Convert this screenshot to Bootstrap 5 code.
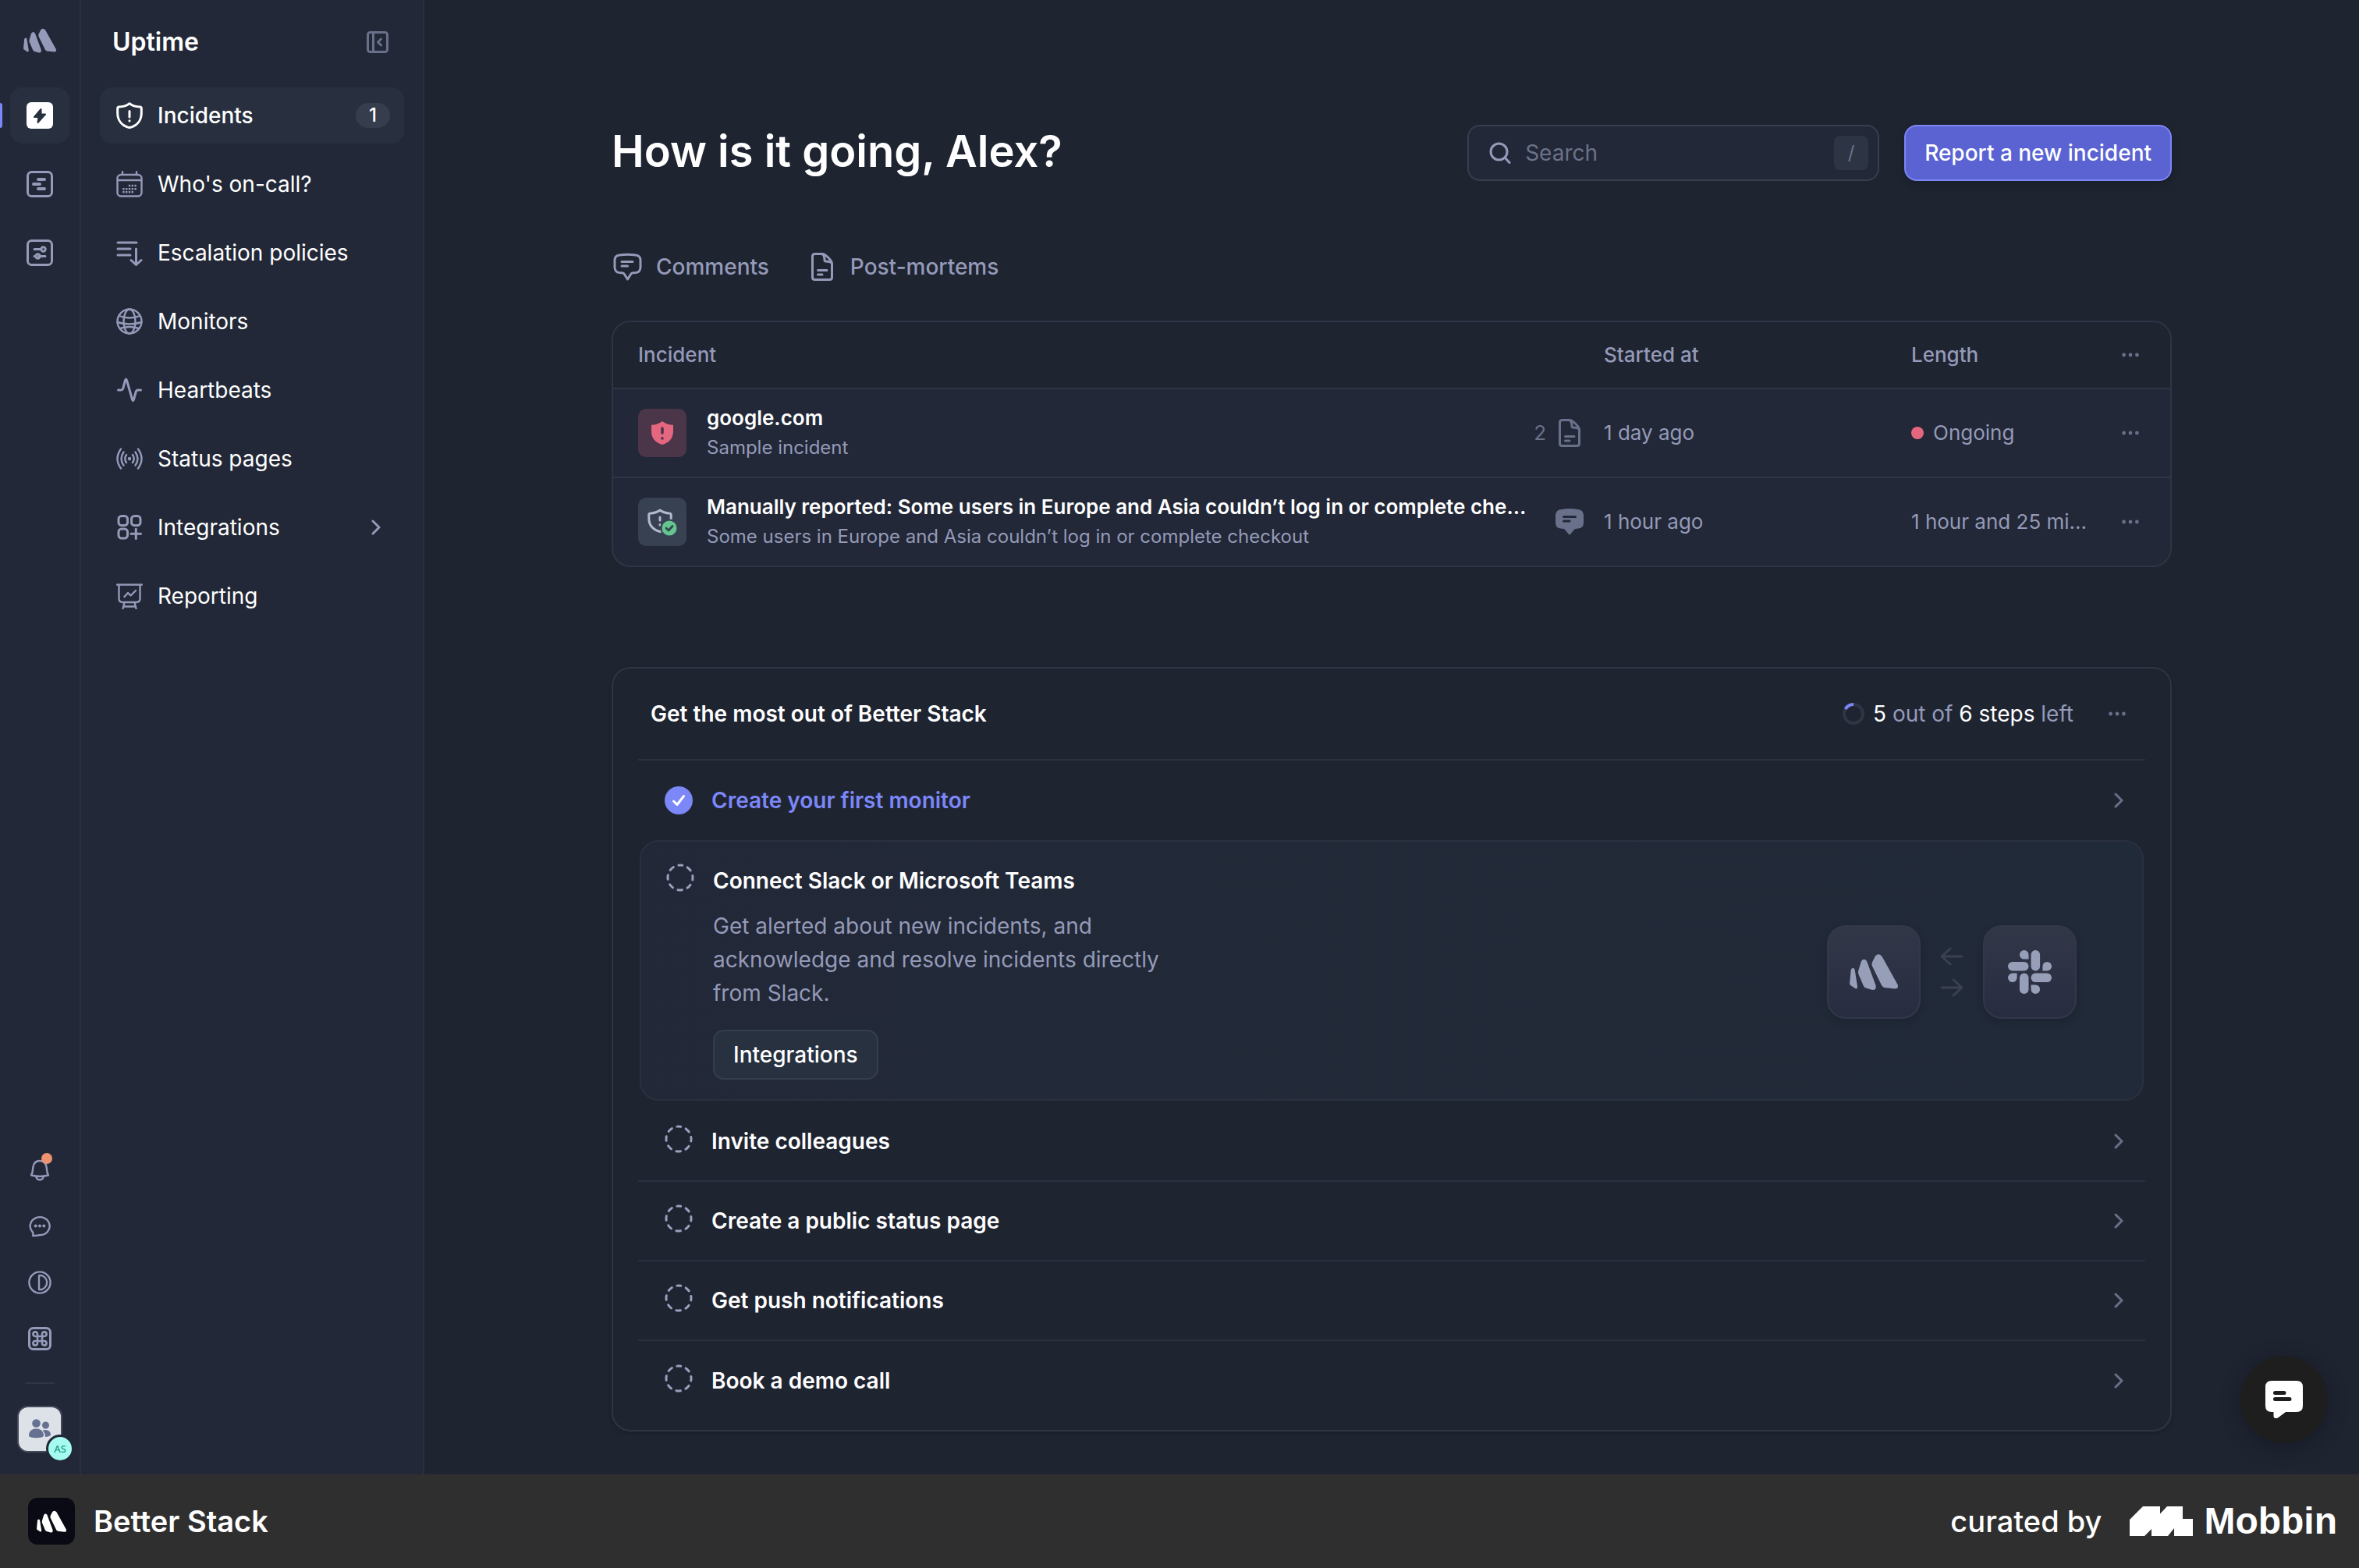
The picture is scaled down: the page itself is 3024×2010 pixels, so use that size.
<!DOCTYPE html>
<html lang="en">
<head>
<meta charset="utf-8">
<meta name="viewport" content="width=device-width, initial-scale=1">
<title>Incidents | Better Stack</title>
<link href="https://cdn.jsdelivr.net/npm/bootstrap@5.3.0/dist/css/bootstrap.min.css" rel="stylesheet">
<style>
  :root {
    --page: #1f2431;
    --panel: #222837;
    --raised: #28303f;
    --line: #2f3544;
    --line-soft: #2a303f;
    --muted: #949ab8;
    --dim: #697089;
    --accent: #7c87f8;
  }
  body { background: var(--page); color: #fff; font-family: Inter, "Liberation Sans", sans-serif; font-size: 28px; line-height: 40px; }
  svg { display: block; flex: none; }
  .ln { fill: none; stroke: currentColor; stroke-width: 3; stroke-linecap: round; stroke-linejoin: round; }
  .ln-thin { stroke-width: 2.4; }
  .app-button { background: none; border: 0; padding: 0; color: inherit; display: flex; align-items: center; justify-content: center; }
  .text-soft { color: var(--muted); }
  .text-dim { color: var(--dim); }

  .rail { width: 104px; background: var(--panel); border-right: 2px solid var(--line-soft); color: var(--muted); padding: 0 13px 28px; }
  .rail-logo { height: 104px; margin-bottom: 8px; }
  .rail-link { width: 76px; height: 72px; border-radius: 16px; color: inherit; margin-bottom: 16px; }
  .rail-link.active { background: var(--raised); color: #fff; }
  .rail-mark { left: -16px; top: 20px; width: 6px; height: 32px; border-radius: 3px; background: var(--accent); }
  .rail-tool { width: 76px; height: 72px; }
  .rail-rule { width: 38px; height: 2px; background: var(--line); margin: 20px 0 28px; }
  .notice-dot { width: 14px; height: 14px; border-radius: 50%; background: #ee9270; right: -3px; top: -8px; }
  .team-tile { width: 58px; height: 60px; border-radius: 14px; border: 2px solid #444a5a; background: #dde1e8; color: #667091; }
  .user-dot { width: 36px; height: 36px; left: 35px; top: 35px; border-radius: 50%; border: 3px solid var(--panel); background: #a5fbf0; color: #1f9c8a; font: 500 13px/30px "Noto Sans", sans-serif; text-align: center; }

  .side { width: 440px; background: var(--panel); border-right: 2px solid var(--line-soft); padding: 0 24px; }
  .side-head { height: 108px; padding: 0 20px 0 16px; margin-bottom: 4px; font-size: 32px; font-weight: 600; }
  .side .nav-link { height: 72px; border-radius: 16px; margin-bottom: 16px; padding: 0 22px 0 21px; gap: 19px; color: #fff; }
  .side .nav-link svg { color: var(--muted); }
  .side .nav-link.active { background: var(--raised); font-weight: 500; padding-right: 18px; }
  .side .nav-link.active svg { color: #fff; }
  .side .badge { width: 44px; height: 32px; padding: 0; font-size: 24px; line-height: 32px; font-weight: 500; background: #363d4d; }

  .page-wrap { max-width: 2000px; padding-top: 160px; }
  .page-head { gap: 32px; margin-bottom: 92px; }
  h1 { font-size: 56px; line-height: 68px; font-weight: 600; margin: 0; }
  .search-box { width: 528px; height: 72px; border: 2px solid #373e4d; border-radius: 16px; background: #222837; padding: 0 12px 0 26px; gap: 18px; color: var(--muted); }
  .search-box input { background: none; border: 0; padding: 0; min-width: 0; font-size: 28px; color: #fff; }
  .search-box input:focus { background: none; box-shadow: none; color: #fff; }
  .search-box input::placeholder { color: #6b728a; }
  .search-box kbd { width: 44px; height: 44px; border-radius: 8px; background: #2d3444; color: #6b728a; font: 400 24px/44px Inter, sans-serif; text-align: center; padding: 0; flex: none; }
  .btn-report { height: 72px; padding: 0 24px; border: 2px solid #7c86f5; border-radius: 16px; background: #5b63d3; color: #fff; font-size: 28px; font-weight: 500; box-shadow: 0 4px 8px rgba(16,20,30,.4); white-space: nowrap; }
  .btn-report:hover { background: #666fe0; color: #fff; }

  .quick-links { gap: 54px; padding-left: 2px; margin-bottom: 51px; line-height: 36px; font-weight: 500; }
  .quick-links a { color: var(--muted); gap: 18px; }

  .frame { border: 2px solid var(--line); border-radius: 24px; overflow: hidden; }
  .incidents { margin-bottom: 128px; background: var(--panel); }
  .incidents table { table-layout: fixed; border-collapse: separate; border-spacing: 0; margin: 0; font-size: 26px; --bs-table-bg: transparent; color: var(--muted); }
  .incidents th, .incidents td { padding: 0; border: 0; vertical-align: middle; font-weight: 400; color: var(--muted); }
  .incidents thead th { height: 84px; background: var(--page); font-weight: 500; }
  .incidents tbody td { height: 114px; border-top: 2px solid var(--line); }
  .incidents .first { padding-left: 32px; }
  .c-flag { width: 98px; } .c-start { width: 394px; } .c-length { width: 230px; } .c-more { width: 102px; }
  .incidents .flag-cell { padding-right: 26px; }
  .kind { width: 62px; height: 62px; border-radius: 10px; flex: none; }
  .kind-open { background: #4b3549; color: #e5677f; }
  .kind-done { background: #384152; color: #b3bad0; }
  .inc-name { gap: 26px; }
  .inc-title { font-weight: 600; color: #fff; line-height: 38px; }
  .inc-sub { font-size: 24px; line-height: 38px; }
  .inc-live { gap: 12px; }
  .live-dot { width: 16px; height: 16px; border-radius: 50%; background: #e5677f; }

  .steps { padding: 0 32px 12px; box-shadow: 0 2px 4px rgba(16,20,30,.3); }
  .steps-head { height: 118px; padding: 0 25px 0 16px; border-bottom: 2px solid var(--line-soft); }
  .steps-head h2 { font-size: 28px; line-height: 40px; font-weight: 600; margin: 0; }
  .steps-menu { margin-left: 45px; }
  .step-row { height: 102px; padding: 0 28px 0 34px; gap: 24px; border-bottom: 2px solid var(--line-soft); color: #fff; font-weight: 600; }
  .step-row.done { color: var(--accent); }
  .step-row.done, .step-row.last { border-bottom: 0; }
  .todo-ring { margin-bottom: 6px; color: #9aa0bd; }
  .step-open { margin: 0 2px 2px; height: 334px; padding: 28px 84px 0 32px; border: 2px solid var(--line-soft); border-radius: 24px; background: linear-gradient(90deg, #222837, #212a38); gap: 24px; }
  .step-open h3 { font-size: 28px; line-height: 40px; font-weight: 600; margin: 2px 0 17px; }
  .step-open p { width: 600px; line-height: 43px; margin-bottom: 25px; font-weight: 400; }
  .btn-step { height: 64px; padding: 0 24px; border: 2px solid #353e4d; border-radius: 14px; background: #28313f; color: #fff; font-size: 28px; font-weight: 500; }
  .btn-step:hover { background: #313b4a; color: #fff; }
  .app-tile { width: 120px; height: 120px; border: 2px solid #323848; border-radius: 24px; background: linear-gradient(#323748, #282c41); box-shadow: 0 4px 8px rgba(20,24,36,.35); color: #979eb8; }
  .link-pair { color: #3a4152; align-self: center; }

  .chat-fab { right: 40px; bottom: 160px; width: 112px; height: 112px; border-radius: 50%; background: #1e1e1e; color: #fff; box-shadow: 0 4px 24px rgba(12,15,26,.45); }

  .brand-bar { height: 120px; background: #2f2f2f; padding: 0 28px 0 36px; font-weight: 500; }
  .brand-tile { width: 60px; height: 60px; border-radius: 12px; background: #090a13; }
  .brand-name { font-size: 38px; font-weight: 600; }
  .brand-by { font-size: 38px; font-weight: 500; margin-right: 36px; }
  .mobbin-name { font: 700 48px/56px "Liberation Sans", sans-serif; margin-left: 14px; }
</style>
<script src="https://cdn.jsdelivr.net/npm/bootstrap@5.3.0/dist/js/bootstrap.bundle.min.js"></script>
</head>
<body>
<svg width="0" height="0" class="position-absolute" aria-hidden="true">
  <symbol id="i-stack" viewBox="0 0 62 46"><path fill="currentColor" d="M33 2.500Q37.500-2 41.500 3L61.500 39Q63.500 44.500 58 44.500L44.500 43Q42.500 42.500 41 40L29 15.500Q28 13 29 10.500ZM15 9Q18.500 4.500 22 9L33.500 40Q35 46 29 46L21 43.500Q18.700 43 17.700 40.500L11.500 26Q10.500 23.500 11.500 20.500ZM1.600 21Q2 18 4.300 18Q6.500 18 6.800 21L10 41Q10.300 45.500 7 44L1.200 40Q0 39 .1 37.500Z"/></symbol>
  <symbol id="i-doc" viewBox="0 0 28 36"><g class="ln"><path d="M4.500 1.500H14C18 1.500 26.500 10 26.500 14V31.500Q26.500 34.500 23.500 34.500H4.500Q1.500 34.500 1.500 31.500V4.500Q1.500 1.500 4.500 1.500Z"/><path d="M14.500 2C17 4 17 7 17 9.500Q17 11 18.500 11C22 11 25 11.500 26.300 13.500M8.500 22.500H20M8.500 28H14"/></g></symbol>
  <symbol id="i-more" viewBox="0 0 22 6"><g fill="currentColor"><circle cx="2.600" cy="3" r="2.400"/><circle cx="11" cy="3" r="2.400"/><circle cx="19.400" cy="3" r="2.400"/></g></symbol>
  <symbol id="i-chev" viewBox="0 0 12 20"><path class="ln" d="M2 2L10 10L2 18"/></symbol>
  <symbol id="i-ring" viewBox="0 0 36 36"><circle cx="18" cy="18" r="16" fill="none" stroke="currentColor" stroke-width="3" stroke-linecap="round" stroke-dasharray="5.600 6.966" stroke-dashoffset="2.800" transform="rotate(-90 18 18)"/></symbol>
</svg>

<div class="min-vh-100 d-flex flex-column">
  <div class="d-flex flex-grow-1">
    <div class="rail d-flex flex-column align-items-center flex-shrink-0">
      <a href="#" class="rail-logo d-flex align-items-center text-reset" aria-label="Better Stack home"><svg width="42" height="32"><use href="#i-stack"/></svg></a>
      <a href="#" class="rail-link active position-relative d-flex align-items-center justify-content-center" aria-label="Uptime">
        <span class="rail-mark position-absolute"></span>
        <svg width="34" height="34" viewBox="0 0 34 34"><rect width="34" height="34" rx="6" fill="#fff"/><path fill="#28303f" stroke="#28303f" stroke-width="2" stroke-linejoin="round" d="M18.500 9L10 19H15.500L14.500 26L24 15.500H18.500Z"/></svg>
      </a>
      <a href="#" class="rail-link d-flex align-items-center justify-content-center" aria-label="Logs">
        <svg width="34" height="34" viewBox="0 0 34 34"><g class="ln"><rect x="1.500" y="1.500" width="31" height="31" rx="5"/><path stroke-width="4" d="M15 11H23M9 17H17M15 23H23"/></g></svg>
      </a>
      <a href="#" class="rail-link d-flex align-items-center justify-content-center" aria-label="Settings">
        <svg width="34" height="34" viewBox="0 0 34 34"><g class="ln"><rect x="1.500" y="1.500" width="31" height="31" rx="5"/><path d="M10 12.500H18M15.500 21.500H24M10 21.500H12"/><circle cx="21.500" cy="12.500" r="2.700"/><circle cx="14.500" cy="21.500" r="2.700"/></g></svg>
      </a>
      <button class="app-button rail-tool mt-auto" aria-label="Notifications">
        <span class="position-relative">
          <svg width="26" height="28" viewBox="0 0 26 28"><g class="ln ln-thin"><path d="M2 20.500C4.500 17 3.500 14 4.500 9.500C5.500 4.500 9 2 13 2S20.500 4.500 21.500 9.500C22.500 14 21.500 17 24 20.500Q18 22 13 22T2 20.500Z"/><path d="M8.500 23Q9.500 26.500 13 26.500T17.500 23"/></g></svg>
          <span class="notice-dot position-absolute"></span>
        </span>
      </button>
      <button class="app-button rail-tool" aria-label="Feedback">
        <svg width="28" height="28" viewBox="0 0 28 28"><g class="ln ln-thin"><path d="M5 26C6 24.500 5.500 22.500 4.500 21A12.500 11.500 0 1 1 14 25.200C11 25.600 8 26.200 5 26Z"/></g><g fill="currentColor"><circle cx="8.700" cy="13.500" r="2"/><circle cx="14" cy="13.500" r="2"/><circle cx="19.300" cy="13.500" r="2"/></g></svg>
      </button>
      <button class="app-button rail-tool" aria-label="Theme">
        <svg width="30" height="30" viewBox="0 0 30 30"><g class="ln ln-thin"><circle cx="15" cy="15" r="13.600"/><path d="M14 6.500Q14 5.800 15 5.800A9.200 9.200 0 0 1 15 24.200Q14 24.200 14 23.500Z"/></g></svg>
      </button>
      <button class="app-button rail-tool" aria-label="Shortcuts">
        <svg width="30" height="30" viewBox="0 0 30 30"><g class="ln"><rect x="1.500" y="1.500" width="27" height="27" rx="5"/><path stroke-width="2.600" d="M12 12H18V18H12ZM12 12V9A2.800 2.800 0 1 0 9 12ZM18 12H21A2.800 2.800 0 1 0 18 9ZM18 18V21A2.800 2.800 0 1 0 21 18ZM12 18H9A2.800 2.800 0 1 0 12 21Z"/></g></svg>
      </button>
      <div class="rail-rule"></div>
      <button class="app-button team-tile position-relative" aria-label="Team and account">
        <svg width="28" height="26" viewBox="0 0 28 26"><g fill="currentColor"><circle cx="9.500" cy="5.500" r="5.300"/><circle cx="21.500" cy="8" r="4.500"/><path d="M0 22C0 15 4 12.500 9.500 12.500S19 15 19 22C16 25 3 25 0 22ZM17.500 14.500Q28 12.500 28 21Q25 23 21 23Q21 18 17.500 14.500Z"/></g></svg>
        <span class="user-dot position-absolute">AS</span>
      </button>
    </div>

    <aside class="side flex-shrink-0">
      <div class="side-head d-flex align-items-center justify-content-between">
        <span>Uptime</span>
        <button class="app-button text-dim" aria-label="Collapse sidebar"><svg width="28" height="28" viewBox="0 0 28 28"><g class="ln"><rect x="1.500" y="1.500" width="25" height="25" rx="3"/><path d="M8.500 2V26M18.500 10L14.500 14L18.500 18"/></g></svg></button>
      </div>
      <nav class="nav flex-column">
        <a href="#" class="nav-link active d-flex align-items-center">
          <svg width="34" height="34" viewBox="0 0 34 34"><path class="ln" d="M17 1.700C13 5 8 6 3.500 6Q1.800 6.300 1.700 8V14C1.700 24 8 30.500 17 32.600C26 30.500 32.300 24 32.300 14V8Q32.200 6.300 30.500 6C26 6 21 5 17 1.700ZM17 11.500V19M17 23.700V24"/></svg>
          <span>Incidents</span><span class="badge rounded-pill ms-auto">1</span>
        </a>
        <a href="#" class="nav-link d-flex align-items-center">
          <svg width="34" height="34" viewBox="0 0 34 34"><g class="ln ln-thin"><rect x="1.500" y="5" width="31" height="27.500" rx="4.500"/><path d="M2 12H32M8 1.300V5M26 1.300V5"/></g><g fill="none" stroke="currentColor" stroke-width="2.400" stroke-dasharray="2.400 1.400"><path d="M15.800 19H26.400M8.200 23.200H26.400M8.200 27.200H22.600"/></g></svg>
          <span>Who's on-call?</span>
        </a>
        <a href="#" class="nav-link d-flex align-items-center">
          <svg width="34" height="34" viewBox="0 0 34 34"><path class="ln" d="M2 4H26M2 12H18M2 20H18M25.500 12V32M19 26.500L25.500 32.500L32 26.500"/></svg>
          <span>Escalation policies</span>
        </a>
        <a href="#" class="nav-link d-flex align-items-center">
          <svg width="34" height="34" viewBox="0 0 34 34"><g class="ln ln-thin"><circle cx="17" cy="17" r="15.500"/><ellipse cx="17" cy="17" rx="7.500" ry="15.500"/><path d="M4 10Q17 15 30 10M1.500 18Q17 23 32.500 18M5 26Q17 22 29 26"/></g></svg>
          <span>Monitors</span>
        </a>
        <a href="#" class="nav-link d-flex align-items-center">
          <svg width="34" height="34" viewBox="0 0 34 34"><path class="ln" d="M2.500 17H6Q8 17 8.700 15L11.500 4.500Q12.500 1.500 13.500 4.500L20.500 29Q21.500 32 22.500 29L25.300 19Q26 17 28 17H31.500"/></svg>
          <span>Heartbeats</span>
        </a>
        <a href="#" class="nav-link d-flex align-items-center">
          <svg width="34" height="34" viewBox="0 0 34 34"><g class="ln ln-thin"><path d="M6 4.500Q-3 17 6 29.500M28 4.500Q37 17 28 29.500M9.500 8.500Q3.500 17 9.500 25.500M24.500 8.500Q30.500 17 24.500 25.500M13 12Q9.500 17 13 22M21 12Q24.500 17 21 22"/></g><circle cx="17" cy="17" r="2.200" fill="currentColor"/></svg>
          <span>Status pages</span>
        </a>
        <a href="#" class="nav-link d-flex align-items-center">
          <svg width="34" height="34" viewBox="0 0 34 34"><g class="ln"><rect x="3" y="2.500" width="11.500" height="12" rx="3.800"/><rect x="19.500" y="2.500" width="11.500" height="12" rx="3.800"/><rect x="3" y="19" width="11.500" height="12" rx="3.800"/><path d="M25.300 19V31.500M19 25.300H31.500"/></g></svg>
          <span>Integrations</span><svg class="ms-auto me-2" width="12" height="20"><use href="#i-chev"/></svg>
        </a>
        <a href="#" class="nav-link d-flex align-items-center">
          <svg width="34" height="34" viewBox="0 0 34 34"><g class="ln ln-thin"><path d="M1 2.500H33M3.500 3V20Q3.500 25 8 25H26Q30.500 25 30.500 20V3M10.500 25.500L8.500 33M23.500 25.500L25.500 33M9.500 30.500H24.500M10.500 18L15 13L18.500 16.500L25 10"/></g></svg>
          <span>Reporting</span>
        </a>
      </nav>
    </aside>

    <main class="flex-grow-1">
      <div class="page-wrap mx-auto">
        <header class="page-head d-flex align-items-start">
          <h1 class="me-auto">How is it going, Alex?</h1>
          <label class="search-box d-flex align-items-center">
            <svg width="28" height="28" viewBox="0 0 28 28"><g class="ln"><circle cx="12.500" cy="12.500" r="10.500"/><path d="M20.500 20.500L26 26.500"/></g></svg>
            <input class="form-control flex-grow-1" type="search" placeholder="Search" aria-label="Search">
            <kbd>/</kbd>
          </label>
          <button class="btn btn-report">Report a new incident</button>
        </header>

        <div class="quick-links d-flex">
          <a href="#" class="d-flex align-items-center text-decoration-none">
            <svg width="37" height="36" viewBox="0 0 37 36"><path class="ln" d="M8 3Q18.500 1.500 29 3Q34.500 3.500 35 9V19Q34.500 25 29 25.500Q24 25.500 23 27L18.500 34L14 27Q13 25.500 8 25.500Q2.500 25 2 19V9Q2.500 3.500 8 3ZM11 11.500H25M11 17H18.500"/></svg>
            <span>Comments</span></a>
          <a href="#" class="d-flex align-items-center text-decoration-none">
            <svg class="me-1" width="28" height="36"><use href="#i-doc"/></svg><span>Post-mortems</span></a>
        </div>

        <section class="frame incidents">
          <table class="table">
            <colgroup><col><col class="c-flag"><col class="c-start"><col class="c-length"><col class="c-more"></colgroup>
            <thead><tr>
              <th class="first" colspan="2">Incident</th><th>Started at</th><th>Length</th>
              <th><button class="app-button mx-auto text-dim" aria-label="Table options"><svg width="22" height="6"><use href="#i-more"/></svg></button></th>
            </tr></thead>
            <tbody>
              <tr>
                <td class="first"><div class="inc-name d-flex align-items-center">
                  <div class="kind kind-open d-flex align-items-center justify-content-center"><svg width="28" height="30" viewBox="0 0 28 30"><path fill="currentColor" d="M14 0Q20 4.500 28 4.800V13C28 22 22.500 27.500 14 30C5.500 27.500 0 22 0 13V4.800Q8 4.500 14 0Z"/><path d="M14 9V15M14 21.800V22" stroke="#4b3549" stroke-width="3.600" stroke-linecap="round"/></svg></div>
                  <div><div class="inc-title">google.com</div><div class="inc-sub">Sample incident</div></div>
                </div></td>
                <td class="flag-cell"><div class="d-flex align-items-center justify-content-end gap-3 text-dim"><span>2</span><svg class="me-1" width="28" height="36"><use href="#i-doc"/></svg></div></td>
                <td>1 day ago</td>
                <td><div class="inc-live d-flex align-items-center"><span class="live-dot"></span>Ongoing</div></td>
                <td><button class="app-button mx-auto text-dim" aria-label="Incident options"><svg width="22" height="6"><use href="#i-more"/></svg></button></td>
              </tr>
              <tr>
                <td class="first"><div class="inc-name d-flex align-items-center">
                  <div class="kind kind-done d-flex align-items-center justify-content-center"><svg width="38" height="36" viewBox="0 0 38 36"><path class="ln" d="M16 3C12 6 8 6.800 4 7Q1.800 7 1.800 9V13C1.800 23 7 28 16 30.500C25 28 30.200 23 30.200 13V9Q30.200 7 28 7C24 6.800 20 6 16 3ZM16 12V16M16 21.500V22"/><circle cx="28" cy="26" r="11.500" fill="#384152"/><circle cx="28" cy="26" r="9.500" fill="#66c491"/><path d="M24 26L27 29L32 23.500" fill="none" stroke="#2d4a48" stroke-width="2.800" stroke-linecap="round" stroke-linejoin="round"/></svg></div>
                  <div class="overflow-hidden"><div class="inc-title text-truncate">Manually reported: Some users in Europe and Asia couldn’t log in or complete checkout</div><div class="inc-sub text-truncate">Some users in Europe and Asia couldn’t log in or complete checkout</div></div>
                </div></td>
                <td class="flag-cell"><svg class="ms-auto text-dim" width="36" height="34" viewBox="0 0 36 34"><path fill="currentColor" d="M7 1Q18-1 29 1Q35.500 2 36 8V19Q35.500 25 29 25.500Q25 25.500 24 27L18 34L12 27Q11 25.500 7 25.500Q.5 25 0 19V8Q.5 2 7 1Z"/><path d="M10.500 10.500H25.500M10.500 16H18" stroke="#222837" stroke-width="3" stroke-linecap="round"/></svg></td>
                <td>1 hour ago</td>
                <td class="text-truncate">1 hour and 25 minutes</td>
                <td><button class="app-button mx-auto text-dim" aria-label="Incident options"><svg width="22" height="6"><use href="#i-more"/></svg></button></td>
              </tr>
            </tbody>
          </table>
        </section>

        <section class="frame steps">
          <div class="steps-head d-flex align-items-center">
            <h2 class="me-auto">Get the most out of Better Stack</h2>
            <svg class="me-2" width="32" height="28" viewBox="0 0 32 28"><circle cx="15" cy="14" r="12" fill="none" stroke="#2f3545" stroke-width="4"/><path d="M4.600 8A12 12 0 0 1 15 2" fill="none" stroke="#7c87f8" stroke-width="4"/></svg>
            <span class="text-soft"><span class="text-white">5</span> out of <span class="text-white">6 steps</span> left</span>
            <button class="app-button steps-menu text-dim" aria-label="Checklist options"><svg width="22" height="6"><use href="#i-more"/></svg></button>
          </div>
          <a href="#" class="step-row done d-flex align-items-center text-decoration-none">
            <svg width="36" height="36" viewBox="0 0 36 36"><circle cx="18" cy="18" r="18" fill="#7c87f8"/><path d="M11.500 19L16 23.500L24.500 12.500" fill="none" stroke="#fff" stroke-width="3" stroke-linecap="round" stroke-linejoin="round"/></svg>
            <span class="me-auto">Create your first monitor</span><svg class="text-dim" width="12" height="20"><use href="#i-chev"/></svg>
          </a>
          <div class="step-open d-flex align-items-start">
            <svg class="todo-ring" width="36" height="36"><use href="#i-ring"/></svg>
            <div class="me-auto">
              <h3>Connect Slack or Microsoft Teams</h3>
              <p class="text-soft">Get alerted about new incidents, and acknowledge and resolve incidents directly from Slack.</p>
              <button class="btn btn-step">Integrations</button>
            </div>
            <div class="d-flex align-self-center gap-4 pb-4">
              <div class="app-tile d-flex align-items-center justify-content-center"><svg width="62" height="46"><use href="#i-stack"/></svg></div>
              <div class="link-pair d-flex flex-column gap-3">
                <svg width="32" height="24" viewBox="0 0 32 24"><path class="ln" d="M29 12H3M14 2L3 12L14 22"/></svg>
                <svg width="32" height="24" viewBox="0 0 32 24"><path class="ln" d="M3 12H29M18 2L29 12L18 22"/></svg>
              </div>
              <div class="app-tile d-flex align-items-center justify-content-center"><svg width="56" height="56" viewBox="0 0 56 56"><g fill="currentColor"><rect x="29.500" width="11.600" height="26.500" rx="5.800"/><rect y="14.900" width="26.500" height="11.600" rx="5.800"/><rect x="14.900" y="29.500" width="11.600" height="26.500" rx="5.800"/><rect x="29.500" y="29.500" width="26.500" height="11.600" rx="5.800"/><path d="M26.500 11.600H20.700A5.800 5.800 0 1 1 26.500 5.800ZM44.400 26.500V20.700A5.800 5.800 0 1 1 50.200 26.500ZM29.500 44.400H35.300A5.800 5.800 0 1 1 29.500 50.200ZM11.600 29.500V35.300A5.800 5.800 0 1 1 5.800 29.500Z"/></g></svg></div>
            </div>
          </div>
          <a href="#" class="step-row d-flex align-items-center text-decoration-none"><svg class="todo-ring" width="36" height="36"><use href="#i-ring"/></svg><span class="me-auto">Invite colleagues</span><svg class="text-dim" width="12" height="20"><use href="#i-chev"/></svg></a>
          <a href="#" class="step-row d-flex align-items-center text-decoration-none"><svg class="todo-ring" width="36" height="36"><use href="#i-ring"/></svg><span class="me-auto">Create a public status page</span><svg class="text-dim" width="12" height="20"><use href="#i-chev"/></svg></a>
          <a href="#" class="step-row d-flex align-items-center text-decoration-none"><svg class="todo-ring" width="36" height="36"><use href="#i-ring"/></svg><span class="me-auto">Get push notifications</span><svg class="text-dim" width="12" height="20"><use href="#i-chev"/></svg></a>
          <a href="#" class="step-row last d-flex align-items-center text-decoration-none"><svg class="todo-ring" width="36" height="36"><use href="#i-ring"/></svg><span class="me-auto">Book a demo call</span><svg class="text-dim" width="12" height="20"><use href="#i-chev"/></svg></a>
        </section>
      </div>
    </main>
  </div>

  <footer class="brand-bar d-flex align-items-center">
    <div class="brand-tile d-flex align-items-center justify-content-center me-4"><svg width="38" height="29"><use href="#i-stack"/></svg></div>
    <span class="brand-name me-auto">Better Stack</span>
    <span class="brand-by">curated by</span>
    <svg width="81" height="38" viewBox="0 0 81 38"><path fill="#fff" d="M0 17L17 0H39V9.500L48 0H68V16H81V38H57V28L49 38H28V29L19 38H0Z"/></svg>
    <span class="mobbin-name">Mobbin</span>
  </footer>
</div>

<button class="app-button chat-fab position-absolute" aria-label="Open chat">
  <svg width="48" height="48" viewBox="0 0 48 48"><path fill="#fff" d="M8 0H40Q48 0 48 8V32Q48 40 40 40H26L16 47.500Q12 49.500 10.500 46V40H8Q0 40 0 32V8Q0 0 8 0Z"/><path d="M12.500 15.500H24M12.500 23.500H31" stroke="#1e1e1e" stroke-width="5" stroke-linecap="round"/></svg>
</button>
</body>
</html>
